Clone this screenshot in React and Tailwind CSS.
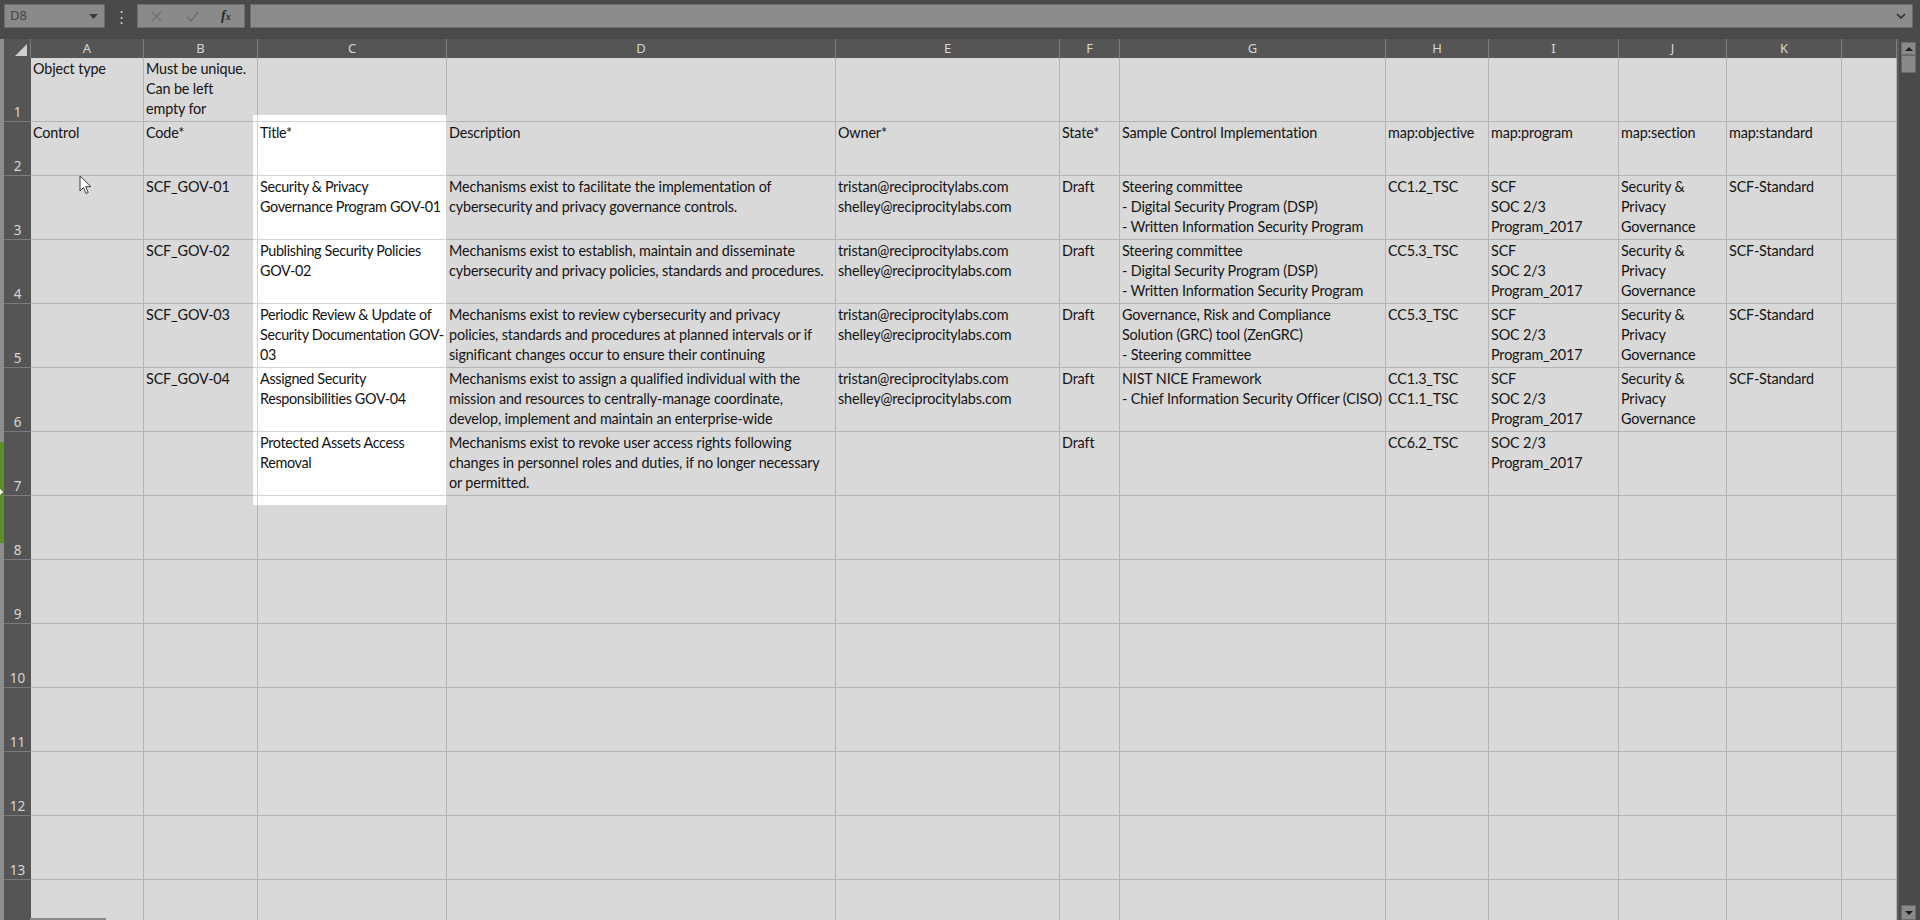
import React from "react";

const cols = [
  { key: "A", w: "w-[113px]" },
  { key: "B", w: "w-[114px]" },
  { key: "C", w: "w-[189px]" },
  { key: "D", w: "w-[389px]" },
  { key: "E", w: "w-[224px]" },
  { key: "F", w: "w-[60px]" },
  { key: "G", w: "w-[266px]" },
  { key: "H", w: "w-[103px]" },
  { key: "I", w: "w-[130px]" },
  { key: "J", w: "w-[108px]" },
  { key: "K", w: "w-[115px]" },
  { key: "", w: "w-[55px]" },
];

const owners = ["tristan@reciprocitylabs.com", "shelley@reciprocitylabs.com"];
const steering = ["Steering committee", "- Digital Security Program (DSP)", "- Written Information Security Program"];
const program = ["SCF", "SOC 2/3", "Program_2017"];
const section = ["Security &", "Privacy", "Governance"];

// each row: height class + cell contents (array of lines per column)
const rows = [
  { n: 1, h: "h-[64px]", cells: [["Object type"], ["Must be unique.", "Can be left", "empty for"]] },
  {
    n: 2,
    h: "h-[54px]",
    cells: [
      ["Control"], ["Code*"], ["Title*"], ["Description"], ["Owner*"], ["State*"],
      ["Sample Control Implementation"], ["map:objective"], ["map:program"], ["map:section"], ["map:standard"],
    ],
  },
  {
    n: 3,
    h: "h-[64px]",
    cells: [
      [], ["SCF_GOV-01"], ["Security & Privacy", "Governance Program GOV-01"],
      ["Mechanisms exist to facilitate the implementation of", "cybersecurity and privacy governance controls."],
      owners, ["Draft"], steering, ["CC1.2_TSC"], program, section, ["SCF-Standard"],
    ],
  },
  {
    n: 4,
    h: "h-[64px]",
    cells: [
      [], ["SCF_GOV-02"], ["Publishing Security Policies", "GOV-02"],
      ["Mechanisms exist to establish, maintain and disseminate", "cybersecurity and privacy policies, standards and procedures."],
      owners, ["Draft"], steering, ["CC5.3_TSC"], program, section, ["SCF-Standard"],
    ],
  },
  {
    n: 5,
    h: "h-[64px]",
    cells: [
      [], ["SCF_GOV-03"], ["Periodic Review & Update of", "Security Documentation GOV-", "03"],
      [
        "Mechanisms exist to review cybersecurity and privacy",
        "policies, standards and procedures at planned intervals or if",
        "significant changes occur to ensure their continuing",
      ],
      owners, ["Draft"], ["Governance, Risk and Compliance", "Solution (GRC) tool (ZenGRC)", "- Steering committee"],
      ["CC5.3_TSC"], program, section, ["SCF-Standard"],
    ],
  },
  {
    n: 6,
    h: "h-[64px]",
    cells: [
      [], ["SCF_GOV-04"], ["Assigned Security", "Responsibilities GOV-04"],
      [
        "Mechanisms exist to assign a qualified individual with the",
        "mission and resources to centrally-manage coordinate,",
        "develop, implement and maintain an enterprise-wide",
      ],
      owners, ["Draft"], ["NIST NICE Framework", "- Chief Information Security Officer (CISO)"],
      ["CC1.3_TSC", "CC1.1_TSC"], program, section, ["SCF-Standard"],
    ],
  },
  {
    n: 7,
    h: "h-[64px]",
    cells: [
      [], [], ["Protected Assets Access", "Removal"],
      [
        "Mechanisms exist to revoke user access rights following",
        "changes in personnel roles and duties, if no longer necessary",
        "or permitted.",
      ],
      [], ["Draft"], [], ["CC6.2_TSC"], ["SOC 2/3", "Program_2017"], [], [],
    ],
  },
  { n: 8, h: "h-[64px]", cells: [] },
  { n: 9, h: "h-[64px]", cells: [] },
  { n: 10, h: "h-[64px]", cells: [] },
  { n: 11, h: "h-[64px]", cells: [] },
  { n: 12, h: "h-[64px]", cells: [] },
  { n: 13, h: "h-[64px]", cells: [] },
  { n: "", h: "h-[64px]", cells: [] },
];

const FormulaBar = () => (
  <div className="flex h-[39px] items-start pt-[4px] pl-[4px] pr-[7px]">
    <div className="flex h-[24px] w-[101px] items-center justify-between border border-[#6c6c6c] bg-[#8a8a8a] pl-[5px] pr-[6px] font-['Noto_Sans',sans-serif] text-[13px] text-[#444444]">
      <span>D8</span>
      <svg width="9" height="5" viewBox="0 0 9 5"><path d="M0 0h9L4.5 5z" fill="#3b3b3b" /></svg>
    </div>
    <div className="flex h-[24px] w-[32px] items-center justify-center text-[15px] leading-none text-[#c9c9c9]">⋮</div>
    <div className="flex h-[24px] w-[108px] items-center border border-[#6c6c6c] bg-[#8a8a8a]">
      <svg className="ml-[13px]" width="11" height="11" viewBox="0 0 11 11">
        <path d="M1 1l9 9M10 1l-9 9" stroke="#6f6f6f" strokeWidth="1.4" />
      </svg>
      <svg className="ml-[24px]" width="13" height="11" viewBox="0 0 13 11">
        <path d="M1 6l4 4 7-9" stroke="#6f6f6f" strokeWidth="1.6" fill="none" />
      </svg>
      <span className="ml-[22px] font-['Liberation_Serif',serif] text-[14px] italic font-bold leading-none text-[#2b2b2b]">
        f<span className="text-[10px]">x</span>
      </span>
    </div>
    <div className="ml-[5px] flex h-[24px] flex-1 items-center justify-end border border-[#6c6c6c] bg-[#8c8c8c] pr-[6px]">
      <svg width="10" height="6" viewBox="0 0 10 6"><path d="M1 1l4 4 4-4" stroke="#2e2e2e" strokeWidth="1.6" fill="none" /></svg>
    </div>
  </div>
);

const Cell = ({ w, lines, tight }) => (
  <div
    className={`${w} shrink-0 overflow-hidden border-r border-b border-black/[0.17] px-[2px] pt-[1px] text-[14.4px] leading-[20px] text-[#141414] ${
      tight ? "tracking-[-0.35px]" : "tracking-[-0.15px]"
    }`}
  >
    {lines &&
      lines.map((l, i) => (
        <div key={i} className="whitespace-nowrap">
          {l}
        </div>
      ))}
  </div>
);

const Scrollbar = () => (
  <div className="flex w-[23px] flex-col border-l-2 border-[#5c5c5c] bg-[#4a4a4a] pl-[2px]">
    <div className="mt-[3px] flex h-[13px] w-[15px] items-center justify-center border border-[#6a6a6a] bg-[#8a8a8a]">
      <svg width="8" height="4" viewBox="0 0 8 4"><path d="M0 4h8L4 0z" fill="#1e1e1e" /></svg>
    </div>
    <div className="h-[18px] w-[15px] border border-[#6a6a6a] bg-[#8a8a8a]" />
    <div className="flex-1" />
    <div className="flex h-[15px] w-[15px] items-center justify-center border border-[#6a6a6a] bg-[#8a8a8a]">
      <svg width="8" height="4" viewBox="0 0 8 4"><path d="M0 0h8L4 4z" fill="#1e1e1e" /></svg>
    </div>
  </div>
);

export default function App() {
  return (
    <div className="relative h-[920px] w-[1920px] overflow-hidden bg-[#4a4a4a] font-['Lato','Open_Sans',sans-serif]">
      <FormulaBar />
      <div className="flex h-[881px]">
        {/* left edge strip */}
        <div className="relative w-[4px] bg-[#8e8e8e]">
          <div className="absolute left-0 top-[403px] h-[101px] w-[4px] bg-[#5a8f2a]" />
          <div className="absolute left-0 top-[450px] h-0 w-0 border-y-[3px] border-l-[3px] border-y-transparent border-l-white" />
        </div>
        {/* sheet */}
        <div className="relative w-[1893px] bg-[#d9d9d9]">
          {/* selection highlight on column C */}
          <div className="absolute left-[249px] top-[76px] h-[390px] w-[194px] bg-white" />
          {/* column headers */}
          <div className="relative flex h-[19px] bg-[#555555] font-['Noto_Sans',sans-serif] text-[13px] text-[#d6d6d6]">
            <div className="relative w-[27px] shrink-0 border-r border-[#7d7d7d]">
              <svg className="absolute bottom-[2px] right-[3px]" width="12" height="12" viewBox="0 0 12 12">
                <path d="M12 0v12H0z" fill="#cfcfcf" />
              </svg>
            </div>
            {cols.map((c) => (
              <div key={c.key + c.w} className={`${c.w} shrink-0 border-r border-[#7d7d7d] text-center leading-[19px]`}>
                {c.key}
              </div>
            ))}
          </div>
          {rows.map((r, ri) => (
            <div key={ri} className={`relative flex ${r.h}`}>
              <div className="flex w-[27px] shrink-0 items-end justify-center border-b border-[#7a7a7a] bg-[#555555] pb-[1px] font-['Noto_Sans',sans-serif] text-[13.5px] leading-[16px] text-[#d6d6d6]">
                {r.n}
              </div>
              {cols.map((c, ci) => (
                <Cell key={ci} w={c.w} lines={r.cells[ci]} tight={ci === 2} />
              ))}
            </div>
          ))}
          {/* mouse pointer */}
          <svg className="absolute left-[75px] top-[136px]" width="13" height="20" viewBox="0 0 13 20">
            <path d="M1 1v15l3.5-3.5 2.5 6 2.2-1-2.5-5.8H12z" fill="#ffffff" stroke="#3a3a3a" strokeWidth="1" />
          </svg>
        </div>
        <Scrollbar />
      </div>
      <div className="absolute bottom-0 left-[30px] h-[2px] w-[76px] bg-[#8a8a8a]" />
    </div>
  );
}
